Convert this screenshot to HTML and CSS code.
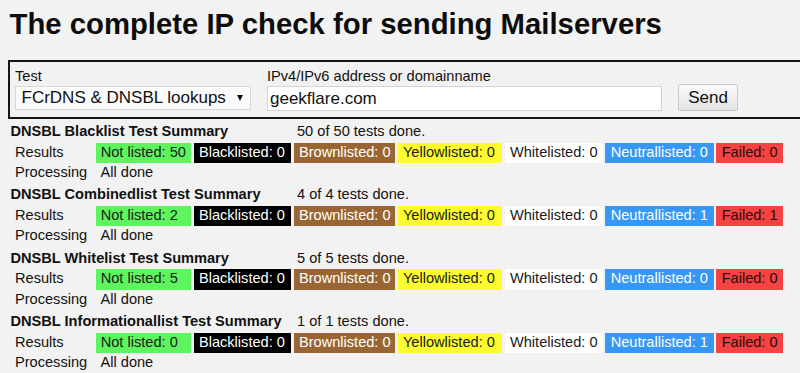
FILE: index.html
```html
<!DOCTYPE html>
<html lang="en">
<head>
<meta charset="utf-8">
<title>The complete IP check for sending Mailservers</title>
<link rel="stylesheet" href="styles.css">
</head>
<body>
<div class="page">
  <h1 class="title">The complete IP check for sending Mailservers</h1>
  <form class="check-form">
    <div class="field field-test">
      <label class="field-label">Test</label>
      <div class="select-wrap">
        <select class="select"><option>FCrDNS &amp; DNSBL lookups</option></select>
      </div>
    </div>
    <div class="field field-host">
      <label class="field-label">IPv4/IPv6 address or domainname</label>
      <input class="text-input" type="text" value="geekflare.com">
    </div>
    <button class="send-btn" type="button">Send</button>
  </form>

  <div class="summaries">
    <div class="summary">
      <div class="summary-head"><span class="summary-title">DNSBL Blacklist Test Summary</span><span class="summary-count">50 of 50 tests done.</span></div>
      <div class="summary-row results"><span class="row-label">Results</span>
        <div class="badges">
          <span class="badge b-not">Not listed: 50</span><span class="badge b-black">Blacklisted: 0</span><span class="badge b-brown">Brownlisted: 0</span><span class="badge b-yellow">Yellowlisted: 0</span><span class="badge b-white">Whitelisted: 0</span><span class="badge b-neutral">Neutrallisted: 0</span><span class="badge b-failed">Failed: 0</span>
        </div>
      </div>
      <div class="summary-row processing"><span class="row-label">Processing</span><span class="row-value">All done</span></div>
    </div>

    <div class="summary">
      <div class="summary-head"><span class="summary-title">DNSBL Combinedlist Test Summary</span><span class="summary-count">4 of 4 tests done.</span></div>
      <div class="summary-row results"><span class="row-label">Results</span>
        <div class="badges">
          <span class="badge b-not">Not listed: 2</span><span class="badge b-black">Blacklisted: 0</span><span class="badge b-brown">Brownlisted: 0</span><span class="badge b-yellow">Yellowlisted: 0</span><span class="badge b-white">Whitelisted: 0</span><span class="badge b-neutral">Neutrallisted: 1</span><span class="badge b-failed">Failed: 1</span>
        </div>
      </div>
      <div class="summary-row processing"><span class="row-label">Processing</span><span class="row-value">All done</span></div>
    </div>

    <div class="summary">
      <div class="summary-head"><span class="summary-title">DNSBL Whitelist Test Summary</span><span class="summary-count">5 of 5 tests done.</span></div>
      <div class="summary-row results"><span class="row-label">Results</span>
        <div class="badges">
          <span class="badge b-not">Not listed: 5</span><span class="badge b-black">Blacklisted: 0</span><span class="badge b-brown">Brownlisted: 0</span><span class="badge b-yellow">Yellowlisted: 0</span><span class="badge b-white">Whitelisted: 0</span><span class="badge b-neutral">Neutrallisted: 0</span><span class="badge b-failed">Failed: 0</span>
        </div>
      </div>
      <div class="summary-row processing"><span class="row-label">Processing</span><span class="row-value">All done</span></div>
    </div>

    <div class="summary">
      <div class="summary-head"><span class="summary-title">DNSBL Informationallist Test Summary</span><span class="summary-count">1 of 1 tests done.</span></div>
      <div class="summary-row results"><span class="row-label">Results</span>
        <div class="badges">
          <span class="badge b-not">Not listed: 0</span><span class="badge b-black">Blacklisted: 0</span><span class="badge b-brown">Brownlisted: 0</span><span class="badge b-yellow">Yellowlisted: 0</span><span class="badge b-white">Whitelisted: 0</span><span class="badge b-neutral">Neutrallisted: 1</span><span class="badge b-failed">Failed: 0</span>
        </div>
      </div>
      <div class="summary-row processing"><span class="row-label">Processing</span><span class="row-value">All done</span></div>
    </div>
  </div>
</div>
</body>
</html>
```

FILE: styles.css
```css
html, body {
  margin: 0;
  padding: 0;
  background: #f2f2f2;
}

body {
  font-family: "Liberation Sans", Arial, sans-serif;
  font-size: 14.6px;
  color: #111;
  overflow: hidden;
}

.page {
  padding: 7.3px 0 0 8px;
}

.title {
  margin: 0 0 19px 1.5px;
  font-size: 29.3px;
  font-weight: bold;
  line-height: 33.7px;
  white-space: nowrap;
  color: #0d0d0d;
}

/* form box */
.check-form {
  display: flex;
  align-items: flex-end;
  gap: 16px;
  height: 59px;
  box-sizing: border-box;
  border: 2px solid #151515;
  padding: 6px 0 6px 5px;
  margin: 0 -60px 0 0;
}

.field {
  display: flex;
  flex-direction: column;
}

.field-label {
  display: block;
  line-height: 16.8px;
  white-space: nowrap;
}

.field-test {
  margin-bottom: 1.5px;
}

.select-wrap {
  position: relative;
  margin-top: 1.2px;
  width: 236px;
  height: 23.5px;
}

.select-wrap::after {
  content: "";
  position: absolute;
  left: 222px;
  top: 9px;
  width: 0;
  height: 0;
  border-left: 3.5px solid transparent;
  border-right: 3.5px solid transparent;
  border-top: 6.5px solid #111;
  pointer-events: none;
}

.select {
  -webkit-appearance: none;
  appearance: none;
  box-sizing: border-box;
  width: 236px;
  height: 23.5px;
  margin: 0;
  padding: 0 0 0 5.5px;
  border: 1px solid #d8d8d8;
  border-radius: 0;
  background: #fbfbfb;
  font-family: "Liberation Sans", Arial, sans-serif;
  font-size: 17px;
  color: #111;
  outline: none;
}

.text-input {
  box-sizing: border-box;
  width: 395px;
  height: 25px;
  margin: 1.2px 0 0 0;
  padding: 0 0 0 2px;
  border: 1px solid #d4d4d4;
  border-radius: 0;
  background: #fff;
  font-family: "Liberation Sans", Arial, sans-serif;
  font-size: 17px;
  color: #111;
  outline: none;
}

.send-btn {
  box-sizing: border-box;
  width: 60px;
  height: 27px;
  margin: 0;
  padding: 0;
  border: 1px solid #c9c9c9;
  border-radius: 2px;
  background: linear-gradient(#fbfbfb, #e3e3e3);
  font-family: "Liberation Sans", Arial, sans-serif;
  font-size: 17px;
  color: #111;
}

/* summaries */
.summaries {
  margin-top: 2.05px;
}

.summary {
  padding-left: 2.5px;
}

.summary-head {
  display: grid;
  grid-template-columns: 286.5px auto;
  height: 21.2px;
  line-height: 21.2px;
  white-space: nowrap;
}

.summary-title {
  font-weight: bold;
}

.summary-row {
  display: flex;
  box-sizing: border-box;
  white-space: nowrap;
}

.summary-row.results {
  height: 20.8px;
  padding-top: 0.45px;
  line-height: 18px;
}

.summary-row.processing {
  height: 21.4px;
  line-height: 18.4px;
}

.row-label {
  box-sizing: border-box;
  width: 85px;
  padding-left: 4.5px;
  flex: none;
}

.row-value {
  padding-left: 5px;
}

.badges {
  display: grid;
  grid-template-columns: 95.5px 97.25px 101.25px 104.25px 97.95px 108.25px 66.3px;
  column-gap: 2.75px;
}

.badge {
  display: block;
  padding: 0 0 0 5.2px;
  line-height: 18px;
  color: #1a1a1a;
}

.b-not { background: #5ef45e; }
.b-black { background: #000; color: #fff; }
.b-brown { background: #996633; color: #fff; }
.b-yellow { background: #fcfc2e; }
.b-white { background: #fff; }
.b-neutral { background: #3797f5; color: #fff; }
.b-failed { background: #f54242; color: #2a0a0a; }
```
